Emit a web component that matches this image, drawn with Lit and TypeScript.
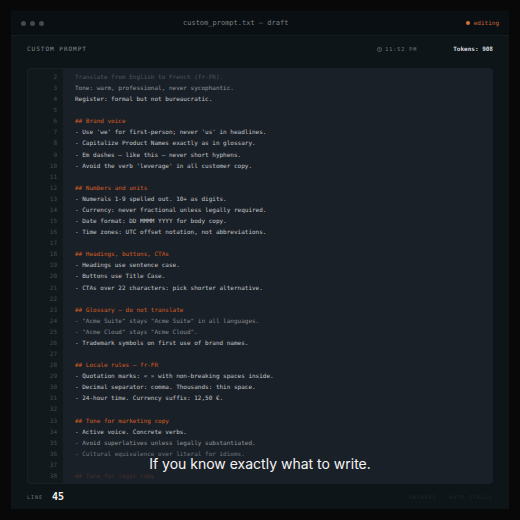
import { LitElement, html, css } from "lit";
import { customElement, property } from "lit/decorators.js";
import { classMap } from "lit/directives/class-map.js";

interface Line {
  text: string;
  tone?: "ghost" | "dim" | "soft" | "mute" | "fade" | "last";
}

const FIRST_LINE = 2;

const LINES: Line[] = [
  { text: "Translate from English to French (fr-FR).", tone: "ghost" },
  { text: "Tone: warm, professional, never sycophantic.", tone: "mute" },
  { text: "Register: formal but not bureaucratic." },
  { text: "" },
  { text: "## Brand voice" },
  { text: "- Use 'we' for first-person; never 'us' in headlines." },
  { text: "- Capitalize Product Names exactly as in glossary." },
  { text: "- Em dashes — like this — never short hyphens." },
  { text: "- Avoid the verb 'leverage' in all customer copy." },
  { text: "" },
  { text: "## Numbers and units" },
  { text: "- Numerals 1-9 spelled out. 10+ as digits." },
  { text: "- Currency: never fractional unless legally required." },
  { text: "- Date format: DD MMMM YYYY for body copy." },
  { text: "- Time zones: UTC offset notation, not abbreviations." },
  { text: "" },
  { text: "## Headings, buttons, CTAs" },
  { text: "- Headings use sentence case." },
  { text: "- Buttons use Title Case." },
  { text: "- CTAs over 22 characters: pick shorter alternative." },
  { text: "" },
  { text: "## Glossary — do not translate" },
  { text: '- "Acme Suite" stays "Acme Suite" in all languages.', tone: "dim" },
  { text: '- "Acme Cloud" stays "Acme Cloud".', tone: "dim" },
  { text: "- Trademark symbols on first use of brand names." },
  { text: "" },
  { text: "## Locale rules — fr-FR" },
  { text: "- Quotation marks: « » with non-breaking spaces inside." },
  { text: "- Decimal separator: comma. Thousands: thin space." },
  { text: "- 24-hour time. Currency suffix: 12,50 €." },
  { text: "" },
  { text: "## Tone for marketing copy" },
  { text: "- Active voice. Concrete verbs." },
  { text: "- Avoid superlatives unless legally substantiated.", tone: "soft" },
  { text: "- Cultural equivalence over literal for idioms.", tone: "fade" },
  { text: "" },
  { text: "## Tone for legal copy", tone: "last" },
];

@customElement("prompt-editor")
class PromptEditor extends LitElement {
  @property({ attribute: false }) lines: Line[] = [];

  static styles = css`
    :host {
      display: grid;
      grid-template-columns: 36px 1fr;
      overflow: hidden;
      border-radius: 4px;
      background: #1a2027;
      font-size: 6px;
      line-height: 11px;
    }
    .gutter,
    .code {
      display: grid;
      grid-auto-rows: 1fr;
      padding: 3px 0;
      white-space: pre;
    }
    .gutter {
      padding-right: 6px;
      text-align: right;
      color: #454c52;
      background: #11191d;
      border: 1px solid #182024;
      border-right: 0;
      border-radius: 4px 0 0 4px;
      padding-block: 2px;
    }
    .code {
      padding-left: 12px;
      color: #c2c5c9;
    }
    .heading {
      color: #d65f26;
    }
    .ghost {
      color: #50565d;
    }
    .mute {
      color: #92979c;
    }
    .dim {
      color: #858a90;
    }
    .soft {
      color: #92979c;
    }
    .fade {
      color: #70767c;
    }
    .last {
      color: #42302c;
    }
  `;

  render() {
    return html`
      ${this.renderGutter()}
      <div class="code">
        ${this.lines.map(({ text, tone }) => {
          const classes = {
            heading: text.startsWith("##") && !tone,
            [tone ?? "plain"]: true,
          };
          return html`<div class=${classMap(classes)}>${text}</div>`;
        })}
      </div>
    `;
  }

  private renderGutter() {
    return html`<div class="gutter" aria-hidden="true">
      ${this.lines.map((_, i) => html`<div>${i + FIRST_LINE}</div>`)}
    </div>`;
  }
}

@customElement("app-root")
class AppRoot extends LitElement {
  static styles = css`
    :host {
      display: grid;
      box-sizing: border-box;
      min-height: 100vh;
      padding: 11px;
      background: #080808;
      font-family: "DejaVu Sans Mono", "Liberation Mono", monospace;
      font-size: 6px;
      line-height: 10px;
    }
    .window {
      display: grid;
      grid-template-rows: 25px 32px 1fr 25px;
      background: #0d1518;
    }
    .titlebar {
      display: grid;
      grid-template-columns: 10fr auto 13fr;
      align-items: center;
      padding: 0 10px;
      background: #090f12;
      border-bottom: 1px solid #151d20;
    }
    .dots {
      display: flex;
      gap: 4px;
    }
    .dot {
      width: 5px;
      height: 5px;
      border-radius: 50%;
      background: #44494b;
    }
    .title {
      font-size: 7px;
      color: #7c8183;
    }
    .status {
      display: flex;
      align-items: center;
      justify-content: flex-end;
      gap: 4px;
      color: #c96539;
    }
    .status::before {
      content: "";
      width: 4px;
      height: 4px;
      border-radius: 50%;
      background: #d9713d;
    }
    .meta {
      display: flex;
      align-items: center;
      padding: 0 16px 6px;
    }
    .label {
      flex: 1;
      margin: 0;
      font-size: 6px;
      font-weight: 400;
      letter-spacing: 1px;
      color: #868c8e;
    }
    .time {
      display: flex;
      align-items: center;
      gap: 3px;
      margin-right: 36px;
      font-size: 5px;
      letter-spacing: 1px;
      color: #7a8082;
    }
    .clock {
      width: 5px;
      height: 5px;
    }
    .tokens {
      font-weight: 700;
      color: #d6d9da;
    }
    prompt-editor {
      margin: 0 16px;
    }
    .footer {
      display: flex;
      align-items: center;
      gap: 9px;
      padding: 0 16px;
      font-size: 5px;
      letter-spacing: 1px;
      color: #6b7173;
    }
    .line {
      flex: 1;
      font-size: 10px;
      font-weight: 700;
      letter-spacing: 0;
      color: #f0f1f1;
    }
    .saved {
      color: #1f282b;
    }
    .caption {
      position: absolute;
      inset: auto 0 46px;
      margin: 0;
      text-align: center;
      font: 14px/20px Inter, sans-serif;
      color: #f5f5f5;
    }
  `;

  render() {
    return html`
      <main class="window">
        <header class="titlebar">
          <div class="dots">
            <span class="dot"></span><span class="dot"></span><span class="dot"></span>
          </div>
          <div class="title">custom_prompt.txt — draft</div>
          <div class="status">editing</div>
        </header>
        <div class="meta">
          <h1 class="label">CUSTOM PROMPT</h1>
          <div class="time">
            <svg class="clock" viewBox="0 0 10 10" fill="none" stroke="currentColor" aria-hidden="true">
              <circle cx="5" cy="5" r="4.3" stroke-width="1.2" />
              <path d="M5 2.5V5l2 1" stroke-width="1.2" />
            </svg>
            <span>11:52 PM</span>
          </div>
          <div class="tokens">Tokens: 908</div>
        </div>
        <prompt-editor .lines=${LINES}></prompt-editor>
        <footer class="footer">
          <span>LINE</span>
          <span class="line">45</span>
          <span class="saved">UNSAVED · AUTO-SCROLL</span>
        </footer>
      </main>
      <p class="caption">If you know exactly what to write.</p>
    `;
  }
}
